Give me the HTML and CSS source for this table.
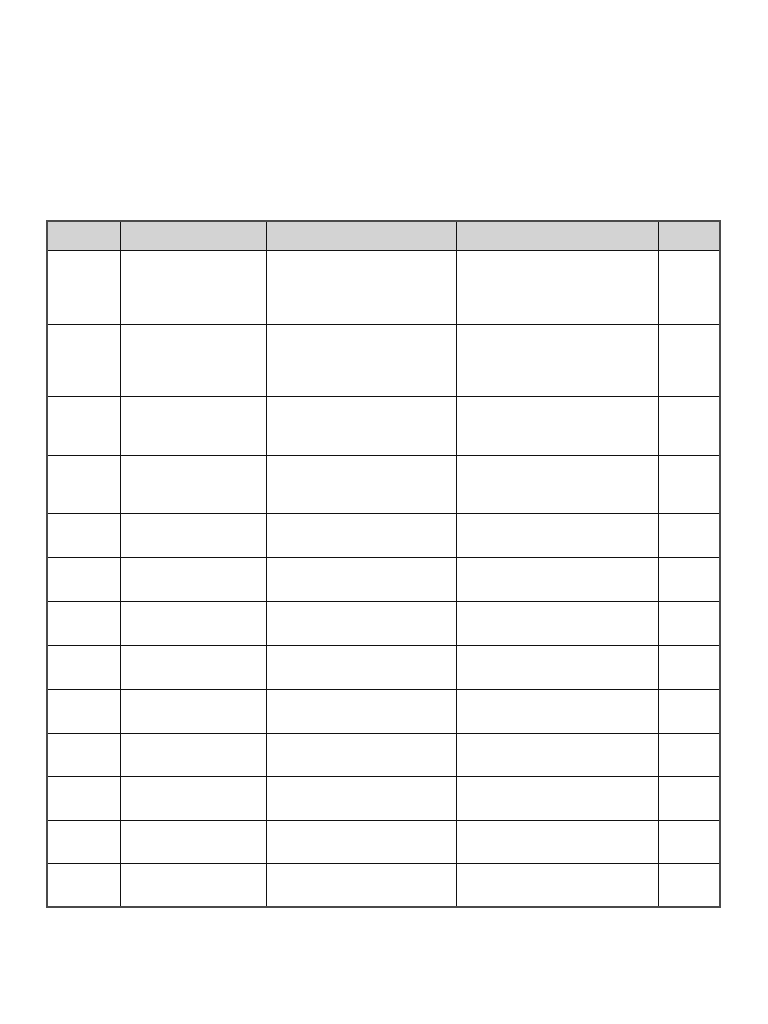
FILE: index.html
```html
<!DOCTYPE html>
<html>
<head>
<meta charset="utf-8">
<link rel="stylesheet" href="styles.css">
</head>
<body>
<div class="page">
<table class="grid">
<colgroup>
<col class="c1"><col class="c2"><col class="c3"><col class="c4"><col class="c5">
</colgroup>
<thead>
<tr class="head"><th></th><th></th><th></th><th></th><th></th></tr>
</thead>
<tbody>
<tr class="r74"><td></td><td></td><td></td><td></td><td></td></tr>
<tr class="r72"><td></td><td></td><td></td><td></td><td></td></tr>
<tr class="r59"><td></td><td></td><td></td><td></td><td></td></tr>
<tr class="r58"><td></td><td></td><td></td><td></td><td></td></tr>
<tr class="r44"><td></td><td></td><td></td><td></td><td></td></tr>
<tr class="r44"><td></td><td></td><td></td><td></td><td></td></tr>
<tr class="r44"><td></td><td></td><td></td><td></td><td></td></tr>
<tr class="r44"><td></td><td></td><td></td><td></td><td></td></tr>
<tr class="r44"><td></td><td></td><td></td><td></td><td></td></tr>
<tr class="r43"><td></td><td></td><td></td><td></td><td></td></tr>
<tr class="r44"><td></td><td></td><td></td><td></td><td></td></tr>
<tr class="r43"><td></td><td></td><td></td><td></td><td></td></tr>
<tr class="r43"><td></td><td></td><td></td><td></td><td></td></tr>
</tbody>
</table>
</div>
</body>
</html>
```
FILE: styles.css
```css
html, body {
  margin: 0;
  padding: 0;
  background: #ffffff;
  font-family: "Liberation Sans", Arial, sans-serif;
}
.page {
  padding-top: 220px;
  padding-left: 46px;
}
.grid {
  border-collapse: collapse;
  table-layout: fixed;
  width: 673px;
  border: 2px solid #4a4a4a;
}
.c1 { width: 73px; }
.c2 { width: 146px; }
.c3 { width: 190px; }
.c4 { width: 202px; }
.c5 { width: 62px; }
.grid th, .grid td {
  border: 1px solid #111111;
  padding: 0;
}
.head th {
  background: #d3d3d3;
  height: 28px;
}
.r74 td { height: 73px; }
.r72 td { height: 71px; }
.r59 td { height: 58px; }
.r58 td { height: 57px; }
.r44 td { height: 43px; }
.r43 td { height: 42px; }
```
